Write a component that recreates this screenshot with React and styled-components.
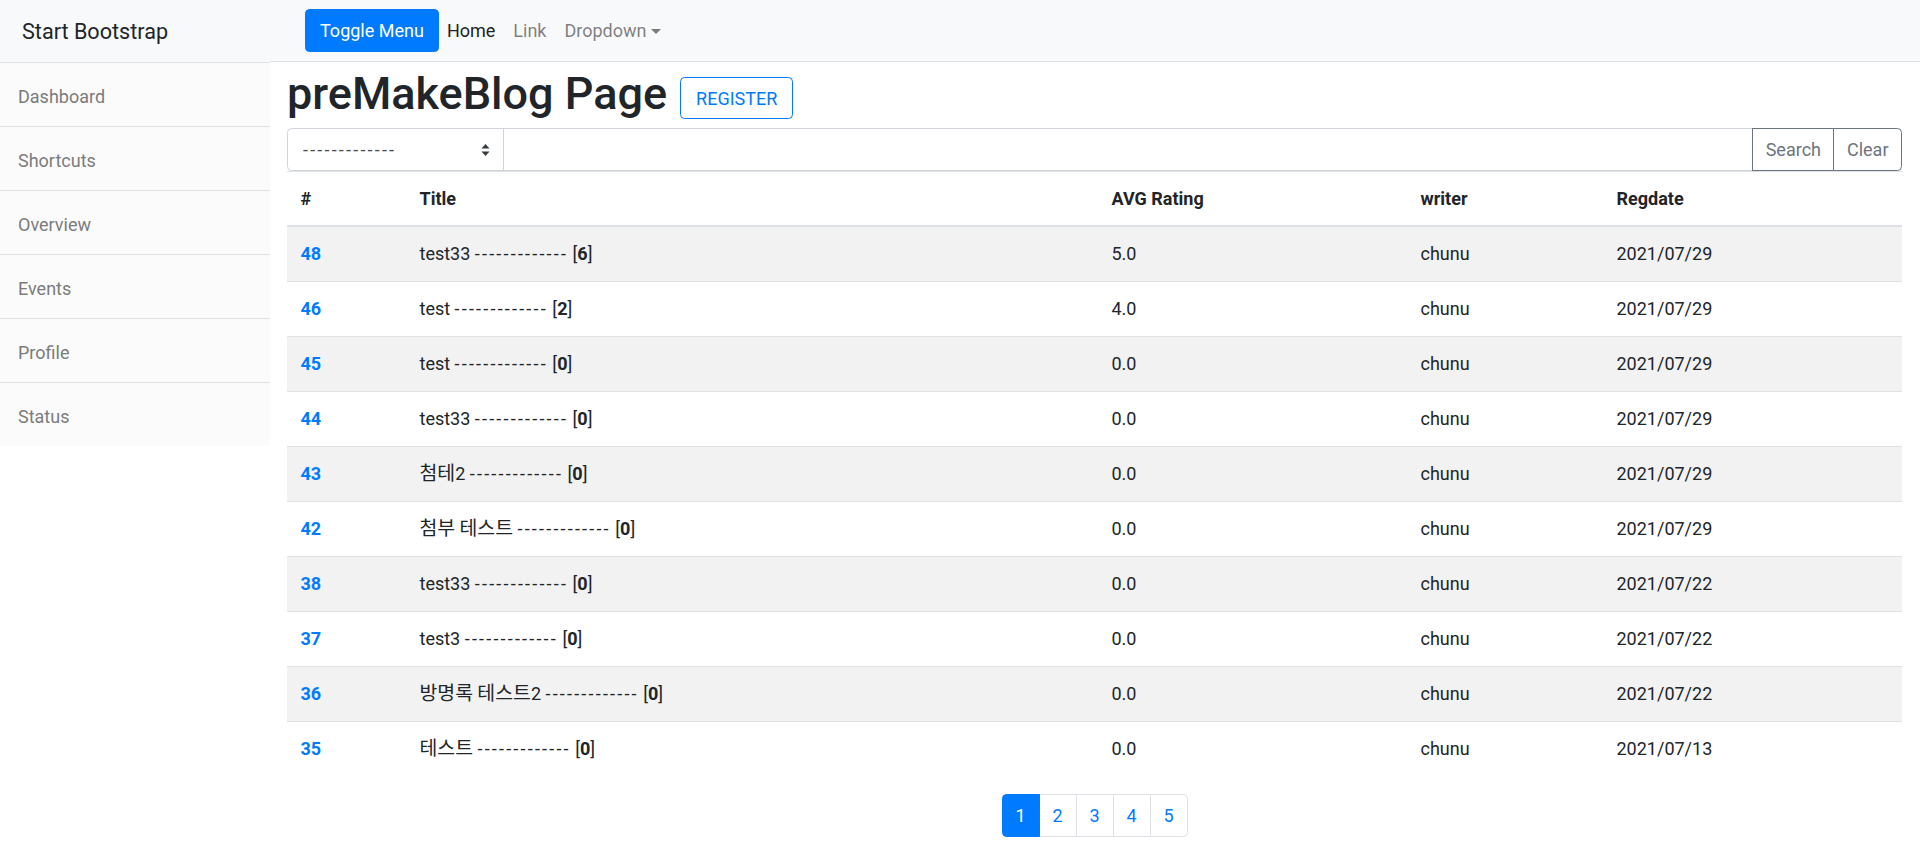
import React from "react";
import styled, { createGlobalStyle } from "styled-components";

const Global = createGlobalStyle`
  html, body { margin: 0; padding: 0; background: #fff; }
  body {
    font-family: Roboto, "Noto Sans CJK KR", "Liberation Sans", sans-serif;
    font-size: 18px;
    line-height: 1.5;
    color: #212529;
  }
  * { box-sizing: border-box; }
`;

const Wrapper = styled.div`
  display: flex;
  width: 1920px;
  min-height: 854px;
`;

const Sidebar = styled.aside`
  width: 270px;
  flex-shrink: 0;
  align-self: flex-start;
  background: #fbfbfb;
`;

const SidebarHeading = styled.div`
  height: 63px;
  display: flex;
  align-items: center;
  padding: 3px 22px 0;
  font-size: 21.6px;
  color: #212529;
  background: #f8f9fa;
  border-bottom: 1px solid #dee2e6;
`;

const SidebarItem = styled.a`
  display: flex;
  align-items: center;
  height: 64px;
  padding: 3px 18px 0;
  color: #7b7b7b;
  text-decoration: none;
  border-bottom: 1px solid #e0e0e0;
  &:last-child { border-bottom: none; height: 63px; }
`;

const Main = styled.div`
  flex: 1;
  min-width: 0;
`;

const Navbar = styled.nav`
  height: 62px;
  display: flex;
  align-items: center;
  padding: 0 0 0 35px;
  background: #f8f9fa;
  border-bottom: 1px solid #dee2e6;
`;

const ToggleButton = styled.button`
  height: 43px;
  padding: 0 14px;
  font: inherit;
  color: #fff;
  background: #007bff;
  border: 1px solid #007bff;
  border-radius: 4.5px;
`;

const NavLink = styled.a`
  display: flex;
  align-items: center;
  padding: 0 9px;
  margin-left: ${(p) => (p.$first ? "-1px" : "0")};
  color: ${(p) => (p.$active ? "rgba(0,0,0,0.9)" : "rgba(0,0,0,0.5)")};
  text-decoration: none;
`;

const Caret = styled.span`
  display: inline-block;
  margin-left: 4.5px;
  border-top: 5.4px solid currentColor;
  border-left: 5.4px solid transparent;
  border-right: 5.4px solid transparent;
  transform: translateY(1px);
`;

const Content = styled.div`
  padding: 0 18px 0 17px;
`;

const TitleRow = styled.div`
  display: flex;
  align-items: flex-start;
  padding-top: 5px;
  margin-bottom: 7px;
`;

const Title = styled.h1`
  margin: 0;
  font-size: 45px;
  font-weight: 500;
  line-height: 54px;
`;

const OutlineButton = styled.button`
  height: ${(p) => p.$h || "42px"};
  padding: 0 ${(p) => p.$px || "13.5px"};
  font: inherit;
  color: ${(p) => p.$color};
  background: #fff;
  border: 1px solid ${(p) => p.$color};
  border-radius: ${(p) => p.$radius || "4.5px"};
  margin-left: ${(p) => p.$ml || "0"};
  margin-top: ${(p) => p.$mt || "0"};
`;

const InputGroup = styled.div`
  display: flex;
  height: 43px;
`;

const SelectBox = styled.div`
  width: 217px;
  display: flex;
  align-items: center;
  justify-content: space-between;
  padding: 0 13px 0 15px;
  color: #495057;
  border: 1px solid #ced4da;
  border-radius: 4.5px 0 0 4.5px;
  background: #fff;
`;

const TextInput = styled.input`
  flex: 1;
  min-width: 0;
  height: 100%;
  margin-left: -1px;
  border: 1px solid #ced4da;
  font: inherit;
  outline: none;
`;

const Dashes = styled.span`
  letter-spacing: 2.2px;
`;

const Hangul = styled.span`
  font-family: "Noto Sans CJK KR", sans-serif;
  font-size: 19.4px;
  line-height: 0;
`;

const Table = styled.table`
  width: 100%;
  border-collapse: collapse;
  table-layout: fixed;
  margin-bottom: 18px;
`;

const Th = styled.th`
  text-align: left;
  font-weight: 700;
  padding: 13px 13.5px;
  border-top: 1px solid #dee2e6;
  border-bottom: 2px solid #dee2e6;
  line-height: 27px;
`;

const Tr = styled.tr`
  background: ${(p) => (p.$striped ? "#f2f2f2" : "#fff")};
`;

const Td = styled.td`
  height: 55px;
  padding: 0 13.5px;
  border-top: 1px solid #dee2e6;
  line-height: 27px;
  white-space: nowrap;
`;

const NumLink = styled.a`
  color: #007bff;
  font-weight: 700;
  text-decoration: none;
`;

const Pagination = styled.ul`
  display: flex;
  justify-content: center;
  list-style: none;
  margin: 0;
  padding: 0;
`;

const PageItem = styled.li`
  width: 38px;
  height: 42.5px;
  display: flex;
  align-items: center;
  justify-content: center;
  margin-left: -1px;
  border: 1px solid ${(p) => (p.$active ? "#007bff" : "#dee2e6")};
  background: ${(p) => (p.$active ? "#007bff" : "#fff")};
  color: ${(p) => (p.$active ? "#fff" : "#007bff")};
  position: relative;
  z-index: ${(p) => (p.$active ? 1 : 0)};
  &:first-child { margin-left: 0; border-radius: 4.5px 0 0 4.5px; }
  &:last-child { border-radius: 0 4.5px 4.5px 0; }
`;

const DASH = "-------------";

const rows = [
  [48, "test33", 6, "5.0", "2021/07/29"],
  [46, "test", 2, "4.0", "2021/07/29"],
  [45, "test", 0, "0.0", "2021/07/29"],
  [44, "test33", 0, "0.0", "2021/07/29"],
  [43, "첨테2", 0, "0.0", "2021/07/29"],
  [42, "첨부 테스트", 0, "0.0", "2021/07/29"],
  [38, "test33", 0, "0.0", "2021/07/22"],
  [37, "test3", 0, "0.0", "2021/07/22"],
  [36, "방명록 테스트2", 0, "0.0", "2021/07/22"],
  [35, "테스트", 0, "0.0", "2021/07/13"],
];

const menu = ["Dashboard", "Shortcuts", "Overview", "Events", "Profile", "Status"];

function renderTitle(text) {
  return text.split(/([\uAC00-\uD7A3 ]*[\uAC00-\uD7A3])/).map((part, i) =>
    /[\uAC00-\uD7A3]/.test(part) ? <Hangul key={i}>{part}</Hangul> : part
  );
}

export default function App() {
  return (
    <>
      <Global />
      <Wrapper>
        <Sidebar>
          <SidebarHeading>Start Bootstrap</SidebarHeading>
          {menu.map((m) => (
            <SidebarItem key={m} href="#">{m}</SidebarItem>
          ))}
        </Sidebar>
        <Main>
          <Navbar>
            <ToggleButton>Toggle Menu</ToggleButton>
            <NavLink $active $first href="#">Home</NavLink>
            <NavLink href="#">Link</NavLink>
            <NavLink href="#">Dropdown<Caret /></NavLink>
          </Navbar>
          <Content>
            <TitleRow>
              <Title>preMakeBlog Page</Title>
              <OutlineButton $color="#007bff" $ml="13px" $mt="10px" $px="15px">REGISTER</OutlineButton>
            </TitleRow>
            <InputGroup>
              <SelectBox>
                <Dashes>{DASH}</Dashes>
                <svg width="9" height="14" viewBox="0 0 9 14">
                  <path d="M4.5 1 L8.5 5.5 H0.5 Z" fill="#343a40" />
                  <path d="M4.5 13 L8.5 8.5 H0.5 Z" fill="#343a40" />
                </svg>
              </SelectBox>
              <TextInput />
              <OutlineButton $color="#6c757d" $h="43px" $px="12.5px" $radius="0" $ml="-1px">Search</OutlineButton>
              <OutlineButton $color="#6c757d" $h="43px" $px="12.5px" $radius="0 4.5px 4.5px 0" $ml="-1px">Clear</OutlineButton>
            </InputGroup>
            <Table>
              <colgroup>
                <col style={{ width: "119px" }} />
                <col style={{ width: "692px" }} />
                <col style={{ width: "309px" }} />
                <col style={{ width: "196px" }} />
                <col />
              </colgroup>
              <thead>
                <tr>
                  <Th>#</Th>
                  <Th>Title</Th>
                  <Th>AVG Rating</Th>
                  <Th>writer</Th>
                  <Th>Regdate</Th>
                </tr>
              </thead>
              <tbody>
                {rows.map(([n, t, c, r, d], i) => (
                  <Tr key={n} $striped={i % 2 === 0}>
                    <Td><NumLink href="#">{n}</NumLink></Td>
                    <Td>{renderTitle(t)} <Dashes>{DASH}</Dashes> [<b>{c}</b>]</Td>
                    <Td>{r}</Td>
                    <Td>chunu</Td>
                    <Td>{d}</Td>
                  </Tr>
                ))}
              </tbody>
            </Table>
            <Pagination>
              {[1, 2, 3, 4, 5].map((p) => (
                <PageItem key={p} $active={p === 1}>{p}</PageItem>
              ))}
            </Pagination>
          </Content>
        </Main>
      </Wrapper>
    </>
  );
}
